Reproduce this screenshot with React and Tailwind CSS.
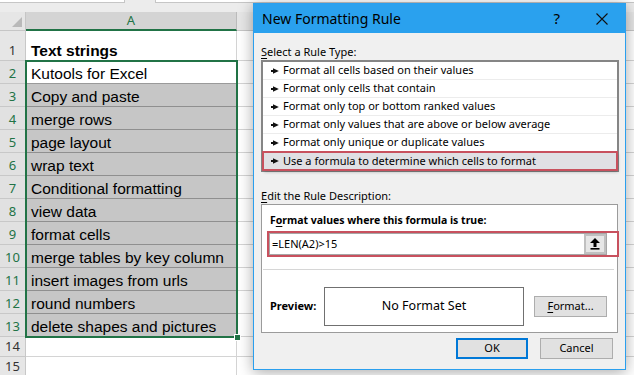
import React from "react";

const rows = [
  { n: 1, text: "Text strings", h: "h-[30px]", bold: true },
  { n: 2, text: "Kutools for Excel", h: "h-[23px]", sel: true, active: true },
  { n: 3, text: "Copy and paste", h: "h-[23px]", sel: true },
  { n: 4, text: "merge rows", h: "h-[23px]", sel: true },
  { n: 5, text: "page layout", h: "h-[23px]", sel: true },
  { n: 6, text: "wrap text", h: "h-[23px]", sel: true },
  { n: 7, text: "Conditional formatting", h: "h-[23px]", sel: true },
  { n: 8, text: "view data", h: "h-[23px]", sel: true },
  { n: 9, text: "format cells", h: "h-[23px]", sel: true },
  { n: 10, text: "merge tables by key column", h: "h-[23px]", sel: true },
  { n: 11, text: "insert images from urls", h: "h-[23px]", sel: true },
  { n: 12, text: "round numbers", h: "h-[23px]", sel: true },
  { n: 13, text: "delete shapes and pictures", h: "h-[23px]", sel: true },
  { n: 14, text: "", h: "h-[20px]" },
  { n: 15, text: "", h: "h-[20px]" },
];

const ruleTypes = [
  "Format all cells based on their values",
  "Format only cells that contain",
  "Format only top or bottom ranked values",
  "Format only values that are above or below average",
  "Format only unique or duplicate values",
  "Use a formula to determine which cells to format",
];

function Bullet() {
  return (
    <svg width="8" height="6" viewBox="0 0 8 6" className="shrink-0">
      <rect x="0" y="2" width="3" height="2" fill="#111" />
      <polygon points="2,0.2 7.8,3 2,5.8" fill="#111" />
    </svg>
  );
}

const ui = { fontFamily: '"Noto Sans", "Open Sans", sans-serif' };
const xl = { fontFamily: '"Liberation Sans", Arial, sans-serif' };

export default function App() {
  return (
    <div className="relative w-[634px] h-[375px] overflow-hidden bg-white" style={xl}>
      {/* top strip (formula bar remnants) */}
      <div className="h-[12px] bg-[#ececec] flex items-start">
        <div className="w-[125px] h-[3px] bg-white border-b border-r border-[#c6c6c6]" />
        <div className="ml-[30px] flex-1 h-[3px] bg-white border-b border-l border-[#c6c6c6]" />
      </div>
      {/* column header */}
      <div className="flex h-[19px]">
        <div className="w-[26px] bg-[#e6e6e6] border-r border-b border-[#c6c6c6] flex items-end justify-end p-[3px]">
          <svg width="10" height="10" viewBox="0 0 10 10">
            <polygon points="10,0 10,10 0,10" fill="#b9b9b9" />
          </svg>
        </div>
        <div className="w-[211px] bg-[#d4d4d4] border-r border-[#bcbcbc] border-b-2 border-b-[#217346] flex items-center justify-center text-[13px] text-[#217346]" style={ui}>
          A
        </div>
        <div className="flex-1 bg-[#e6e6e6] border-b border-[#c6c6c6]" />
      </div>
      {/* rows */}
      {rows.map((r) => (
        <div key={r.n} className={`flex ${r.h}`}>
          <div
            className={`w-[26px] shrink-0 border-r border-b border-[#c8c8c8] flex items-end justify-center pb-[1px] text-[13px] leading-[17px] ${
              r.sel ? "bg-[#e1e1e1] text-[#217346]" : "bg-[#e6e6e6] text-[#333]"
            }`}
            style={ui}
          >
            {r.n}
          </div>
          <div
            className={`w-[211px] shrink-0 border-r border-b flex items-end pl-[5px] pb-[1px] text-[15.5px] leading-[17px] text-black whitespace-nowrap ${
              r.bold ? "font-bold" : ""
            } ${
              r.sel
                ? r.active
                  ? "bg-white border-[#9a9a9a]"
                  : "bg-[#c6c6c6] border-[#8f8f8f]"
                : "bg-white border-[#d4d4d4]"
            }`}
          >
            {r.text}
          </div>
          <div className="flex-1 border-b border-[#d4d4d4]" />
        </div>
      ))}

      {/* selection border */}
      <div className="absolute left-[25px] top-[60px] w-[213px] h-[278px] border-2 border-[#217346]" />
      <div className="absolute left-[234px] top-[334px] w-[7px] h-[7px] bg-[#217346] border border-white" />

      {/* dialog */}
      <div
        className="absolute left-[253px] top-[3px] w-[373px] h-[367px] border border-[#2a9fee] bg-[#f0f0f0] flex flex-col shadow-[0_2px_14px_rgba(0,0,0,0.35)] text-black"
        style={ui}
      >
        <div className="h-[29px] bg-[#2aa1ee] flex items-center pl-[8px] text-[14px] shrink-0">
          <span>New Formatting Rule</span>
          <span className="ml-auto text-[15px]">?</span>
          <svg width="12" height="12" viewBox="0 0 12 12" className="ml-[36px] mr-[17px]">
            <path d="M0.5 0.5 L11.5 11.5 M11.5 0.5 L0.5 11.5" stroke="#111" strokeWidth="1.1" />
          </svg>
        </div>
        <div className="flex flex-col pl-[7px]">
          <div className="mt-[10px] h-[17px] leading-[17px] text-[11px]">
            <span className="underline underline-offset-2">S</span>elect a Rule Type:
          </div>
          <div className="w-[358px] h-[112px] border-2 border-[#858585] bg-white flex flex-col">
            {ruleTypes.map((t, i) => (
              <div
                key={t}
                className={`h-[18px] shrink-0 flex items-center pl-[8px] gap-[4px] text-[11px] ${
                  i === ruleTypes.length - 1
                    ? "bg-[#e0e0e4] outline-2 outline-[#c8515e] -outline-offset-1 shadow-[1px_2px_3px_rgba(0,0,0,0.25)]"
                    : "border-b border-[#ececec]"
                }`}
              >
                <Bullet />
                <span>{t}</span>
              </div>
            ))}
          </div>
          <div className="mt-[15px] h-[17px] leading-[17px] text-[11px]">
            <span className="underline underline-offset-2">E</span>dit the Rule Description:
          </div>
          <div className="w-[357px] h-[129px] border border-[#9b9b9b] bg-white flex flex-col">
            <div className="ml-[8px] mt-[7px] h-[17px] leading-[17px] text-[10.5px] font-bold">
              F<span className="underline underline-offset-2">o</span>rmat values where this formula is true:
            </div>
            <div className="ml-[5px] mt-[2px] w-[352px] h-[26px] border-2 border-[#c8515e] shrink-0">
              <div className="w-[338px] h-[22px] border border-[#a6a6a6] flex items-stretch">
                <div className="flex-1 flex items-center pl-[2px] text-[11px]">=LEN(A2)&gt;15</div>
                <div className="w-[22px] bg-[#e6e6e6] border-2 border-[#c0c0c0] flex items-center justify-center">
                  <svg width="10" height="12" viewBox="0 0 10 12">
                    <polygon points="5,0 10,5 6.5,5 6.5,9 3.5,9 3.5,5 0,5" fill="#000" />
                    <rect x="0.5" y="10" width="9" height="1.6" fill="#000" />
                  </svg>
                </div>
              </div>
            </div>
            <div className="mt-[12px] ml-[1px] mr-[3px] h-px bg-[#d6d6d6]" />
            <div className="mt-[17px] flex items-center">
              <div className="ml-[8px] w-[54px] text-[11px] font-bold">Preview:</div>
              <div className="w-[200px] h-[39px] border border-[#707070] flex items-center justify-center text-[12.5px]">
                No Format Set
              </div>
              <div className="ml-[10px] w-[73px] h-[21px] bg-[#e1e1e1] border border-[#adadad] flex items-center justify-center text-[11px]">
                <span className="underline underline-offset-2">F</span>ormat...
              </div>
            </div>
          </div>
        </div>
        <div className="mt-[5px] flex justify-end pr-[12px] gap-[12px]">
          <div className="w-[72px] h-[21px] bg-[#e1e1e1] border-2 border-[#0078d7] flex items-center justify-center text-[11px]">
            OK
          </div>
          <div className="w-[73px] h-[21px] bg-[#e1e1e1] border border-[#adadad] flex items-center justify-center text-[11px]">
            Cancel
          </div>
        </div>
      </div>
    </div>
  );
}
